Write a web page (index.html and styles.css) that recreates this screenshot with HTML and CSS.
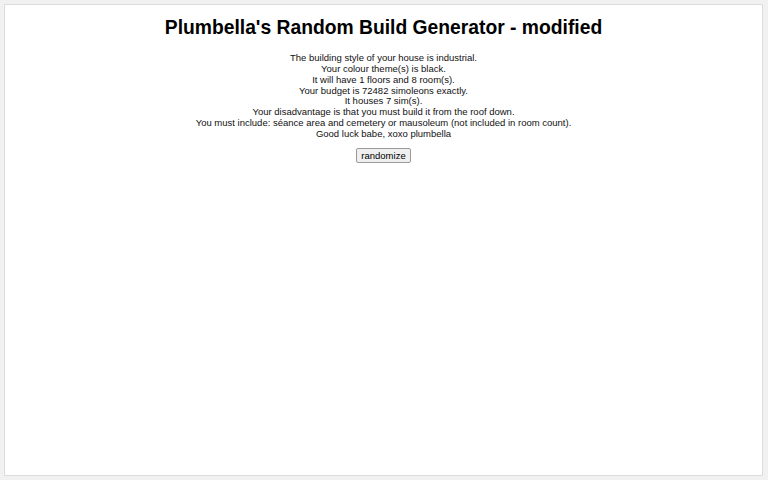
FILE: index.html
```html
<!DOCTYPE html>
<html>
<head>
<meta charset="utf-8">
<title>Plumbella's Random Build Generator</title>
<link rel="stylesheet" href="styles.css">
</head>
<body>
<main class="card">
  <h1 class="title">Plumbella's Random Build Generator - modified</h1>
  <div class="result">
    <p>The building style of your house is industrial.</p>
    <p>Your colour theme(s) is black.</p>
    <p>It will have 1 floors and 8 room(s).</p>
    <p>Your budget is 72482 simoleons exactly.</p>
    <p>It houses 7 sim(s).</p>
    <p>Your disadvantage is that you must build it from the roof down.</p>
    <p>You must include: séance area and cemetery or mausoleum (not included in room count).</p>
    <p>Good luck babe, xoxo plumbella</p>
  </div>
  <button class="randomize" type="button">randomize</button>
</main>
</body>
</html>
```
FILE: styles.css
```css
html, body {
  height: 100%;
}
body {
  margin: 0;
  padding: 4px 5px 4px 4px;
  box-sizing: border-box;
  background: #f1f1f1;
  font-family: "Liberation Sans", Arial, sans-serif;
  color: #111;
}
.card {
  box-sizing: border-box;
  height: 100%;
  background: #fff;
  border: 1px solid #dcdcdc;
  display: flex;
  flex-direction: column;
  align-items: center;
  padding-top: 11px;
}
.title {
  margin: 0;
  font-size: 19.3px;
  font-weight: bold;
  line-height: 24px;
  color: #000;
}
.result {
  margin-top: 13px;
  text-align: center;
  font-size: 9.5px;
  line-height: 10.86px;
}
.result p {
  margin: 0;
}
.randomize {
  margin-top: 8px;
  font-family: "Liberation Sans", Arial, sans-serif;
  font-size: 9.5px;
  padding: 1px 4px;
  background: #efefef;
  border: 1px solid #9a9a9a;
  border-radius: 2px;
  color: #000;
}
```
